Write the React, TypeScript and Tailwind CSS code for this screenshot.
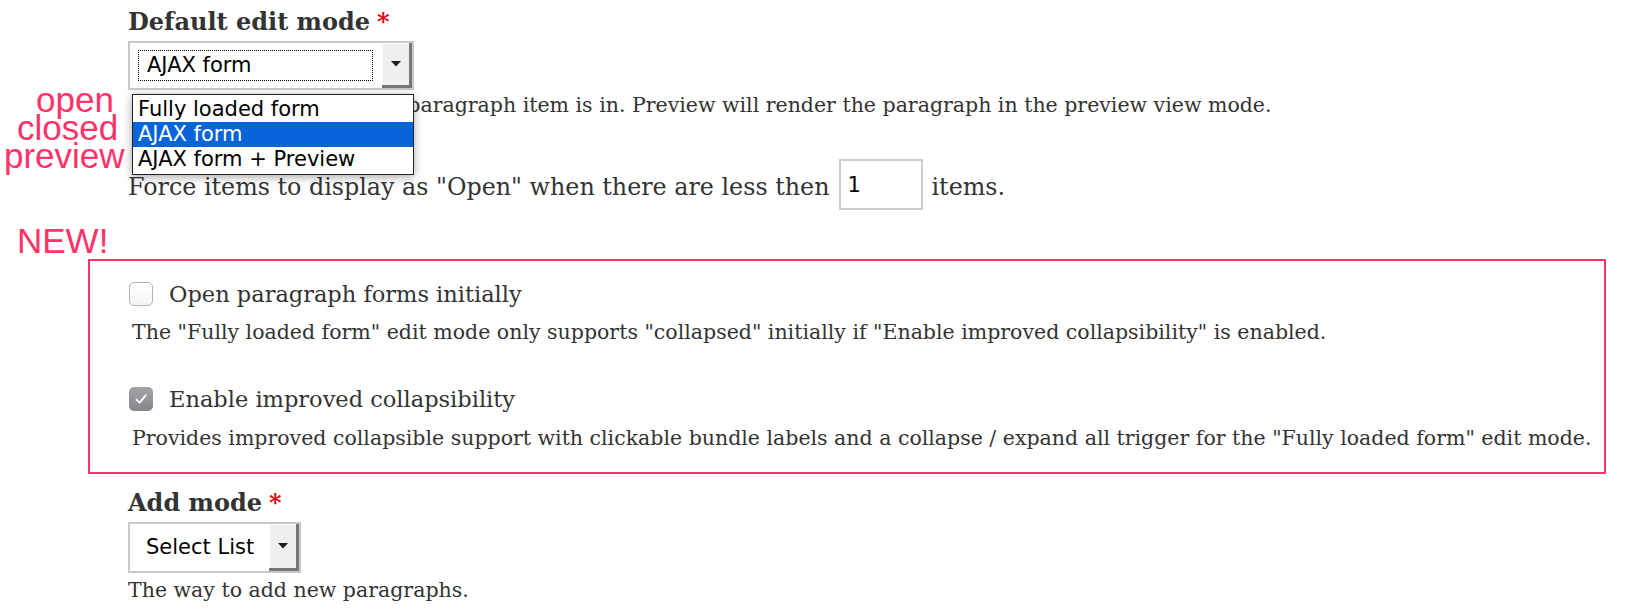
const serif = "font-['DejaVu_Serif',serif]";
const sans = "font-['DejaVu_Sans',sans-serif]";
const note = "font-['Liberation_Sans',sans-serif]";

const EDIT_MODES = ['Fully loaded form', 'AJAX form', 'AJAX form + Preview'];

function Arrow() {
  return (
    <svg width="10" height="6" viewBox="0 0 10 6" aria-hidden="true">
      <path d="M0 0H10L5 5.5Z" fill="#1c1c1c" />
    </svg>
  );
}

function Required() {
  return <span className="ml-[7px] text-[#e8000b]">*</span>;
}

function SelectButton() {
  return (
    <div className="flex w-[30px] shrink-0 items-center justify-center border-b-[3px] border-r-[3px] border-[#777] bg-[#efefef] shadow-[inset_1px_1px_0_#fff]">
      <Arrow />
    </div>
  );
}

function Checkbox({ checked }: { checked?: boolean }) {
  if (checked) {
    return (
      <span className="flex h-[24px] w-[24px] shrink-0 items-center justify-center rounded-[5px] bg-gradient-to-b from-[#a2a2a7] to-[#86868b]">
        <svg width="16" height="16" viewBox="0 0 16 16" aria-hidden="true">
          <path d="M3.5 8.6L6.6 11.6L12.6 4.4" fill="none" stroke="#fff" strokeWidth="2" strokeLinecap="round" strokeLinejoin="round" />
        </svg>
      </span>
    );
  }
  return <span className="h-[24px] w-[24px] shrink-0 rounded-[5px] border border-[#b4b4b4] bg-gradient-to-b from-white to-[#f4f4f4]" />;
}

export default function App() {
  return (
    <div className="relative h-[612px] w-[1648px] overflow-hidden bg-white text-[#333]">
      <div className={`pl-[88px] pt-[7px] ${serif}`}>
        <div className="ml-[40px]">
          <h3 className="text-[24px] font-bold leading-[30px]">
            Default edit mode
            <Required />
          </h3>

          <div className="relative mt-[4px] w-[286px]">
            <div className={`flex h-[49px] border-2 border-[#c9c9c9] bg-white ${sans}`}>
              <div className="flex flex-1 py-[7px] pl-[8px] pr-[9px]">
                <span className="flex flex-1 items-center border border-dotted border-black pl-[8px] text-[21px] text-black">
                  AJAX form
                </span>
              </div>
              <SelectButton />
            </div>

            <ul className={`absolute left-[4px] top-[53px] z-10 w-[282px] border border-[#222] bg-white py-[2px] text-[21px] leading-[25px] text-black shadow-[0_2px_9px_rgba(0,0,0,0.35)] ${sans}`}>
              {EDIT_MODES.map((mode) => (
                <li key={mode} className={`h-[25px] pl-[5px] ${mode === 'AJAX form' ? 'bg-[#0764d9] text-white' : ''}`}>
                  {mode}
                </li>
              ))}
            </ul>
          </div>

          <p className="mt-[2px] whitespace-nowrap pl-[4px] text-[20.5px] leading-[26px]">
            The default edit mode the paragraph item is in. Preview will render the paragraph in the preview view mode.
          </p>

          <div className="mt-[41px] flex items-center leading-[30px]">
            <span className="mt-[5px] whitespace-nowrap text-[23.8px]">Force items to display as "Open" when there are less then</span>
            <div className={`ml-[10px] flex h-[51px] w-[84px] items-center border-2 border-[#cccccc] pl-[6px] text-[21px] text-black ${sans}`}>1</div>
            <span className="ml-[8px] mt-[5px] text-[23.8px]">items.</span>
          </div>
        </div>

        <div className="relative mt-[49px] w-[1518px] border-2 border-[#ff3369] pb-[21px] pl-[39px] pt-[18px]">
          <span className={`absolute left-[-73px] top-[-38px] text-[35px] leading-[35px] text-[#ff3369] ${note}`}>NEW!</span>

          <label className="flex h-[30px] items-center gap-[16px] text-[22.5px] leading-[30px]">
            <Checkbox />
            <span>Open paragraph forms initially</span>
          </label>
          <p className="ml-[3px] mt-[10px] whitespace-nowrap text-[20.5px] leading-[26px]">
            The "Fully loaded form" edit mode only supports "collapsed" initially if "Enable improved collapsibility" is enabled.
          </p>

          <label className="mt-[39px] flex h-[30px] items-center gap-[16px] text-[22.5px] leading-[30px]">
            <Checkbox checked />
            <span>Enable improved collapsibility</span>
          </label>
          <p className="ml-[3px] mt-[11px] whitespace-nowrap text-[20.5px] leading-[26px]">
            Provides improved collapsible support with clickable bundle labels and a collapse / expand all trigger for the "Fully loaded form" edit mode.
          </p>
        </div>

        <div className="ml-[40px] mt-[14px]">
          <h3 className="text-[24px] font-bold leading-[30px]">
            Add mode
            <Required />
          </h3>
          <div className={`mt-[4px] flex h-[51px] w-[173px] border-2 border-[#c9c9c9] bg-white ${sans}`}>
            <span className="flex flex-1 items-center pl-[16px] text-[21px] text-black">Select List</span>
            <SelectButton />
          </div>
          <p className="mt-[4px] text-[20.5px] leading-[26px]">The way to add new paragraphs.</p>
        </div>
      </div>

      <div className={`absolute left-0 top-[86px] text-[35px] leading-[28px] text-[#ff3369] ${note}`}>
        <div className="ml-[36px]">open</div>
        <div className="ml-[17px]">closed</div>
        <div className="ml-[4px]">preview</div>
      </div>
    </div>
  );
}
